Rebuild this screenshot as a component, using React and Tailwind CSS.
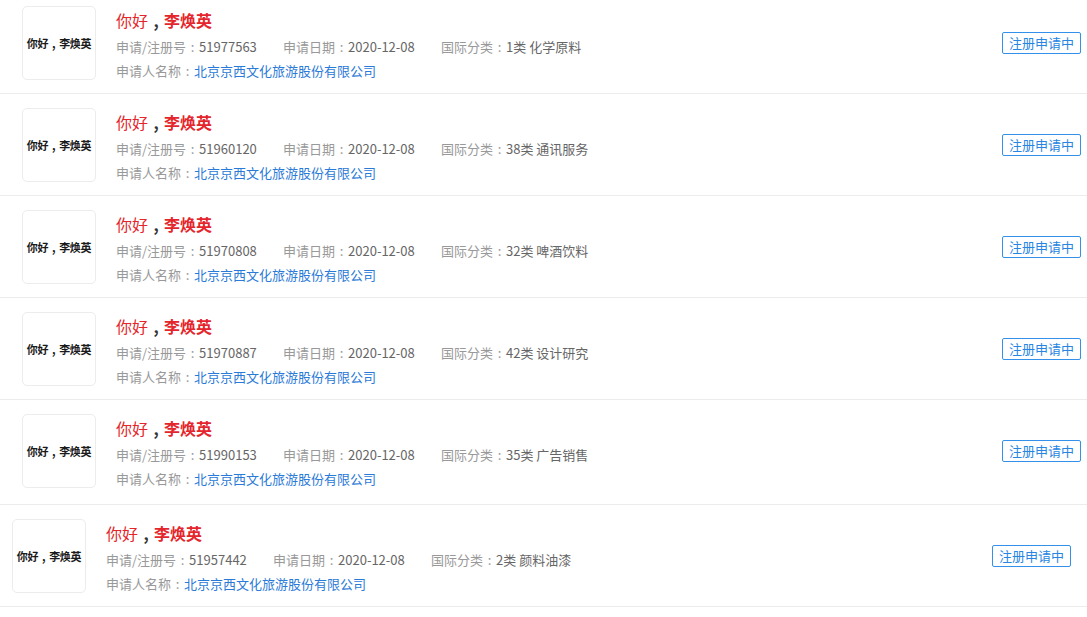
import React from 'react';

const ROWS = [
  { no: '51977563', cls: '1类 化学原料' },
  { no: '51960120', cls: '38类 通讯服务' },
  { no: '51970808', cls: '32类 啤酒饮料' },
  { no: '51970887', cls: '42类 设计研究' },
  { no: '51990153', cls: '35类 广告销售', pad: 'pt-[14px] pb-[16px] pl-[22px] pr-[6px]' },
  { no: '51957442', cls: '2类 颜料油漆', pad: 'pt-[14px] pb-[13px] pl-[12px] pr-[16px]' },
];

// centred full-width punctuation, as YaHei draws it
const Colon = () => <span className="inline-block w-[1em] text-center">:</span>;
const Comma = ({ cls = '' }) => <span className={`inline-block w-[1em] text-center ${cls}`}>,</span>;

function Row({ row }) {
  const pad = row.pad || 'pt-[14px] pb-[13px] pl-[22px] pr-[6px]';
  return (
    <div className={`flex items-start border-b border-[#ececec] ${pad}`}>
      {/* trademark thumbnail */}
      <div className="w-[74px] h-[74px] shrink-0 rounded-[5px] border border-[#ececec] flex items-center justify-center bg-white">
        <span className="text-[11px] font-bold text-[#1a1a1a] tracking-[-0.3px]">
          你好<Comma />李焕英
        </span>
      </div>

      <div className="ml-[20px] h-[74px] flex-1 min-w-0">
        <div className="text-[16px] leading-[28px] text-[#e4262c]">
          你好<Comma cls="text-[#333] font-bold" /><span className="font-bold">李焕英</span>
        </div>
        <div className="mt-[1px] flex text-[13px] leading-[24px] text-[#999]">
          <span className="w-[167px] shrink-0">
            申请/注册号<Colon /><span className="text-[#666]">{row.no}</span>
          </span>
          <span className="w-[158px] shrink-0">
            申请日期<Colon /><span className="text-[#666]">2020-12-08</span>
          </span>
          <span>
            国际分类<Colon /><span className="text-[#666]">{row.cls}</span>
          </span>
        </div>
        <div className="text-[13px] leading-[24px] text-[#999]">
          申请人名称<Colon /><span className="text-[#2a7ad8]">北京京西文化旅游股份有限公司</span>
        </div>
      </div>

      <div className="self-center shrink-0">
        <span className="block h-[22px] px-[6px] border border-[#3391ec] rounded-[2px] text-[13px] leading-[20px] text-[#2786e2]">
          注册申请中
        </span>
      </div>
    </div>
  );
}

export default function App() {
  return (
    <div className="w-[1087px] h-[617px] overflow-hidden bg-white" style={{ fontFamily: '"Noto Sans CJK SC", "Noto Sans", sans-serif' }}>
      <div className="-mt-[8px]">
        {ROWS.map((r, i) => (
          <Row key={i} row={r} />
        ))}
      </div>
    </div>
  );
}
